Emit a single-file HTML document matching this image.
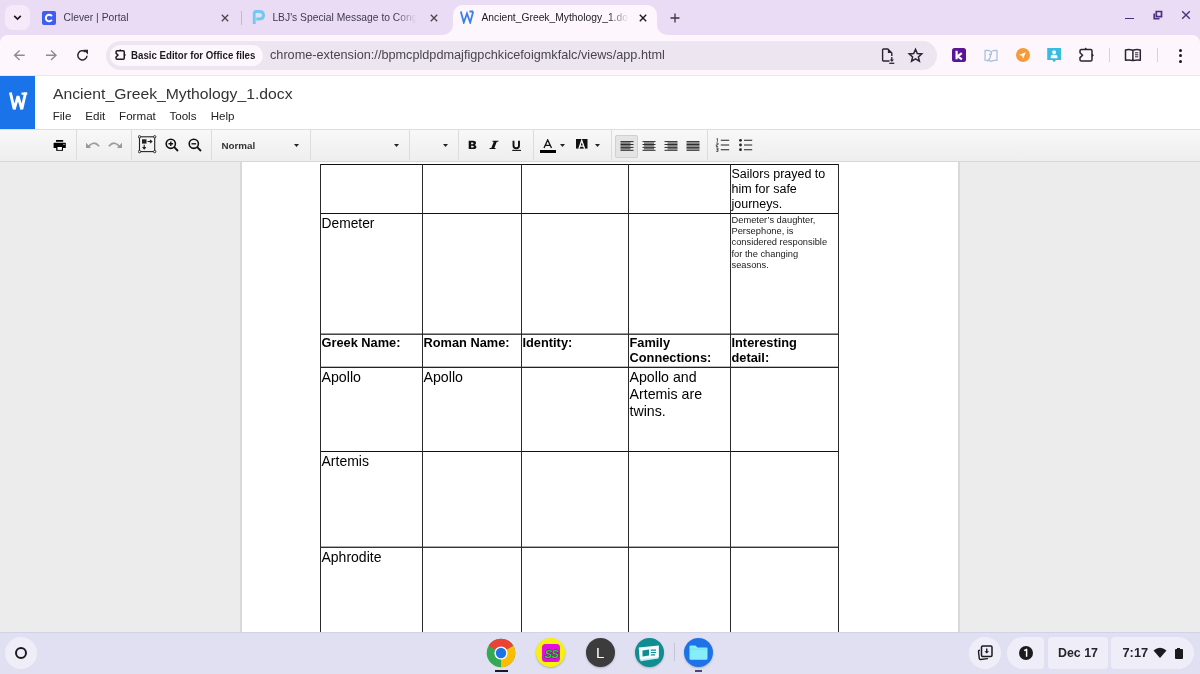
<!DOCTYPE html>
<html><head><meta charset="utf-8">
<style>
*{margin:0;padding:0;box-sizing:border-box}
body{will-change:transform}
html,body{width:1200px;height:674px;overflow:hidden;background:#ebdcf5;font-family:"Liberation Sans",sans-serif;position:relative}
.a{position:absolute}
.t{white-space:nowrap}
</style></head><body>
<!-- TAB STRIP -->
<div class="a" style="left:5px;top:5px;width:25px;height:25px;border-radius:8px;background:#f6e9f9"></div>
<svg class="a" style="left:11px;top:11px" width="13" height="13" viewBox="0 0 13 13"><path d="M3.2 4.8 L6.5 8.1 L9.8 4.8" fill="none" stroke="#1d1b20" stroke-width="1.7"/></svg>
<div class="a" style="left:443px;top:25px;width:10px;height:10px;background:#fdf7fd"></div>
<div class="a" style="left:433px;top:15px;width:20px;height:20px;border-radius:50%;background:#ebdcf5"></div>
<!-- tab 1 -->
<div class="a" style="left:42px;top:10.5px;width:14px;height:14px;border-radius:2px;background:#3f5ef0"></div>
<svg class="a" style="left:42px;top:10.5px" width="14" height="14" viewBox="0 0 14 14"><path d="M9.9 5.2 A3.3 3.3 0 1 0 9.9 8.8" fill="none" stroke="#fff" stroke-width="2"/></svg>
<div class="a t" style="left:63.5px;top:11px;font-size:10.3px;color:#403a4c;line-height:14px">Clever | Portal</div>
<svg class="a" style="left:221px;top:14px" width="8" height="8" viewBox="0 0 8 8"><path d="M0.8 0.8 L7.2 7.2 M7.2 0.8 L0.8 7.2" stroke="#49454f" stroke-width="1.3"/></svg>
<div class="a" style="left:241px;top:10.5px;width:1px;height:14px;background:#d5a9ee"></div>
<!-- tab 2 -->
<svg class="a" style="left:252px;top:10px" width="13" height="15" viewBox="0 0 13 15"><path d="M2.3 1.5 V14 M2.3 1.5 H7 Q11.5 1.5 11.5 5.3 Q11.5 9 7 9 H2.3" fill="none" stroke="#73c8f0" stroke-width="3"/><path d="M4 3.5 V12.5" stroke="#b8e6fa" stroke-width="0.8"/></svg>
<div class="a t" style="left:272.4px;top:11px;font-size:10.3px;color:#403a4c;line-height:14px;width:146px;overflow:hidden">LBJ's Special Message to Cong</div>
<div class="a" style="left:395px;top:8px;width:24px;height:18px;background:linear-gradient(90deg,rgba(235,220,245,0),#ebdcf5 90%)"></div>
<svg class="a" style="left:430px;top:14px" width="8" height="8" viewBox="0 0 8 8"><path d="M0.8 0.8 L7.2 7.2 M7.2 0.8 L0.8 7.2" stroke="#49454f" stroke-width="1.3"/></svg>
<!-- active tab -->
<div class="a" style="left:453px;top:5px;width:204px;height:35px;background:#fdf7fd;border-radius:10px 10px 0 0"></div>
<div class="a" style="left:657px;top:25px;width:10px;height:10px;background:#fdf7fd"></div>
<div class="a" style="left:657px;top:15px;width:20px;height:20px;border-radius:50%;background:#ebdcf5"></div>
<svg class="a" style="left:460px;top:10px" width="14" height="14" viewBox="0 0 14 14"><path d="M0.8 1.5 L3.8 12.5 L7 3.5 L10.2 12.5 L13.2 1.5 M9.5 1.5 H13.2" fill="none" stroke="#3b7fe6" stroke-width="1.8" stroke-linejoin="miter"/></svg>
<div class="a t" style="left:481.4px;top:11px;font-size:10.3px;color:#1d1b20;line-height:14px;width:147px;overflow:hidden">Ancient_Greek_Mythology_1.docx</div>
<div class="a" style="left:608px;top:8px;width:22px;height:18px;background:linear-gradient(90deg,rgba(253,247,253,0),#fdf7fd 95%)"></div>
<svg class="a" style="left:639px;top:14px" width="8" height="8" viewBox="0 0 8 8"><path d="M0.8 0.8 L7.2 7.2 M7.2 0.8 L0.8 7.2" stroke="#1d1b20" stroke-width="1.4"/></svg>
<svg class="a" style="left:670px;top:13px" width="10" height="10" viewBox="0 0 10 10"><path d="M5 0.5 V9.5 M0.5 5 H9.5" stroke="#3a3540" stroke-width="1.3"/></svg>
<!-- window controls -->
<div class="a" style="left:1125px;top:17.5px;width:9px;height:1.6px;background:#4c2f80"></div>
<svg class="a" style="left:1152px;top:10px" width="11" height="10" viewBox="0 0 11 10"><path d="M2.2 3.5 V8.8 H7.5" fill="none" stroke="#4c2f80" stroke-width="1.6"/><path d="M4.3 1.5 H9.5 V6.6 H4.3 Z" fill="none" stroke="#4c2f80" stroke-width="1.7"/></svg>
<svg class="a" style="left:1181px;top:10px" width="10" height="10" viewBox="0 0 10 10"><path d="M1.2 1.2 L8.8 8.8 M8.8 1.2 L1.2 8.8" stroke="#4c2f80" stroke-width="1.4"/></svg>

<!-- TOOLBAR -->
<div class="a" style="left:0;top:35px;width:1200px;height:41px;background:#fdf7fd;border-radius:8px 8px 0 0;border-bottom:1px solid #efe3ee"></div>
<svg class="a" style="left:13px;top:49px" width="13" height="13" viewBox="0 0 13 13"><path d="M11.7 6.2 H1.8 M6.6 1.4 L1.6 6.2 L6.6 11" fill="none" stroke="#8f8a95" stroke-width="1.4"/></svg>
<svg class="a" style="left:45px;top:49px" width="13" height="13" viewBox="0 0 13 13"><path d="M0.9 6.2 H10.8 M6 1.4 L11 6.2 L6 11" fill="none" stroke="#8f8a95" stroke-width="1.4"/></svg>
<svg class="a" style="left:76px;top:49px" width="13" height="13" viewBox="0 0 13 13"><path d="M11 6.7 A4.6 4.6 0 1 1 9.5 2.9" fill="none" stroke="#2a2530" stroke-width="1.5"/><path d="M7.2 0.8 H12 V5.6 Z" fill="#2a2530"/></svg>
<!-- address pill -->
<div class="a" style="left:106px;top:41px;width:831px;height:29px;border-radius:15px;background:#ede6f0"></div>
<div class="a" style="left:110px;top:45px;width:153px;height:21px;border-radius:11px;background:#fdf7fd"></div>
<svg class="a" style="left:113px;top:47px" width="16" height="16" viewBox="0 0 16 16"><path d="M4.1 3.85 H10.2 Q11.25 3.85 11.25 4.9 V11.3 Q11.25 12.35 10.2 12.35 H4.1 Q3.05 12.35 3.05 11.3 V10 L5 8.1 L3.05 6.2 V4.9 Q3.05 3.85 4.1 3.85 Z" fill="none" stroke="#1d1b20" stroke-width="1.5" stroke-linejoin="round"/><path d="M5.6 3.9 L7.15 2 L8.7 3.9 Z M11.2 6.6 L13.1 8.1 L11.2 9.6 Z" fill="#1d1b20"/></svg>
<div class="a t" style="left:130.8px;top:48px;font-size:11.2px;font-weight:bold;color:#1d1b20;line-height:14px;transform:scaleX(0.866);transform-origin:0 0">Basic Editor for Office files</div>
<div class="a t" style="left:270px;top:47px;font-size:12.7px;color:#49454f;line-height:16px">chrome-extension://bpmcpldpdmajfigpchkicefoigmkfalc/views/app.html</div>
<svg class="a" style="left:880px;top:47px" width="16" height="18" viewBox="0 0 16 18"><path d="M9.5 14 H3.5 Q2.6 14 2.6 13.1 V2.9 Q2.6 2 3.5 2 H7.9 L11.8 5.9 V9" fill="none" stroke="#2a2530" stroke-width="1.4" stroke-linejoin="round"/><path d="M7.9 2 V5.9 H11.8 Z" fill="#2a2530"/><path d="M11.8 10 V14.2" stroke="#2a2530" stroke-width="1.3"/><path d="M9.6 12.6 L11.8 14.8 L14 12.6 Z" fill="#2a2530"/><path d="M9.3 16.3 H14.3" stroke="#2a2530" stroke-width="1.3"/></svg>
<svg class="a" style="left:907px;top:47px" width="17" height="16" viewBox="0 0 17 16"><path d="M8.5 2.3 L10.3 6.5 L14.8 6.9 L11.4 9.9 L12.4 14.2 L8.5 11.9 L4.6 14.2 L5.6 9.9 L2.2 6.9 L6.7 6.5 Z" fill="none" stroke="#2a2530" stroke-width="1.5" stroke-linejoin="miter"/></svg>
<!-- extensions -->
<svg class="a" style="left:952px;top:48px" width="14" height="14" viewBox="0 0 14 14"><rect x="0" y="0" width="14" height="14" rx="2.5" fill="#5a1596"/><path d="M4.6 2.8 V11.3" stroke="#fff" stroke-width="2.2"/><path d="M9.8 5.2 L5.6 8.3 L9.9 11.4" fill="none" stroke="#fff" stroke-width="2.2"/></svg>
<svg class="a" style="left:983px;top:48px" width="16" height="16" viewBox="0 0 16 16"><path d="M2 2.5 H6 L8.3 3.8 L10.6 2.5 H14 V12.3 H10.6 L8.3 13.4 L6 12.3 H2 Z" fill="none" stroke="#a9c3dc" stroke-width="1.3" stroke-linejoin="round"/><path d="M6 6 Q8 6.5 7.5 8.5 Q7 10.5 4.5 13.5 M8.3 3.8 V7" fill="none" stroke="#a9c3dc" stroke-width="1.3"/></svg>
<div class="a" style="left:1015.5px;top:48px;width:14.2px;height:14.2px;border-radius:50%;background:#f59c38"></div>
<svg class="a" style="left:1017px;top:49.5px" width="11" height="11" viewBox="0 0 11 11"><path d="M8.8 2.2 L2 5 L5.3 5.7 L6 9 Z" fill="#fff"/></svg>
<svg class="a" style="left:1046px;top:47px" width="16" height="17" viewBox="0 0 16 17"><path d="M1.2 1 H15 V13 H10 L8.1 15.3 L6.2 13 H1.2 Z" fill="#3bbbe0"/><rect x="6.3" y="3.6" width="3.6" height="3.4" rx="1.2" fill="#fff"/><path d="M4.8 11.2 V9.6 Q4.8 7.8 6.8 7.8 H9.4 Q11.4 7.8 11.4 9.6 V11.2 Z" fill="#fff"/></svg>
<svg class="a" style="left:1078px;top:47px" width="17" height="16" viewBox="0 0 17 16"><path d="M3.3 2.4 H12.7 Q14 2.4 14 3.7 V12.7 Q14 14 12.7 14 H3.3 Q2 14 2 12.7 V10.6 L4.6 8.2 L2 5.8 V3.7 Q2 2.4 3.3 2.4 Z" fill="none" stroke="#2a2530" stroke-width="1.5" stroke-linejoin="round"/><path d="M6 2.6 L7.7 0.6 L9.4 2.6 Z M13.8 6.4 L16 8.2 L13.8 10 Z" fill="#2a2530"/></svg>
<div class="a" style="left:1109px;top:48px;width:1px;height:14px;background:#e2c7ef"></div>
<svg class="a" style="left:1124px;top:48px" width="18" height="14" viewBox="0 0 18 14"><path d="M1.5 2 Q5 1 8.9 2.3 Q12.8 1 16.3 2 V12.2 Q12.8 11.4 8.9 12.6 Q5 11.4 1.5 12.2 Z M8.9 2.3 V12.6" fill="none" stroke="#2a2530" stroke-width="1.5" stroke-linejoin="round"/><path d="M11 4.8 H14.3 M11 6.8 H14.3 M11 8.8 H14.3" stroke="#2a2530" stroke-width="1"/></svg>
<div class="a" style="left:1157px;top:48px;width:1px;height:14px;background:#e2c7ef"></div>
<div class="a" style="left:1178.8px;top:48.5px;width:3px;height:3px;border-radius:50%;background:#1d1b20"></div>
<div class="a" style="left:1178.8px;top:54px;width:3px;height:3px;border-radius:50%;background:#1d1b20"></div>
<div class="a" style="left:1178.8px;top:59.5px;width:3px;height:3px;border-radius:50%;background:#1d1b20"></div>

<!-- APP HEADER -->
<div class="a" style="left:0;top:76px;width:1200px;height:53px;background:#fff"></div>
<div class="a" style="left:0;top:76px;width:35px;height:53px;background:#1a73e8"></div>
<svg class="a" style="left:8px;top:92px" width="20" height="19" viewBox="0 0 20 19"><path d="M2.4 0.5 L6.2 17.3 L10 4.2 L13.8 17.3 L17.6 0.5" fill="none" stroke="#fff" stroke-width="2.9" stroke-linejoin="miter" stroke-miterlimit="3"/><path d="M13.5 1.6 H19.3" stroke="#fff" stroke-width="2.2"/></svg>
<div class="a t" style="left:53px;top:84.9px;font-size:14.3px;color:#333;line-height:18px;transform:scaleX(1.1);transform-origin:0 0">Ancient_Greek_Mythology_1.docx</div>
<div class="a t" style="left:52.699999999999996px;top:109.3px;font-size:11.6px;color:#222;line-height:14px">File</div>
<div class="a t" style="left:85.30000000000001px;top:109.3px;font-size:11.6px;color:#222;line-height:14px">Edit</div>
<div class="a t" style="left:119.10000000000001px;top:109.3px;font-size:11.6px;color:#222;line-height:14px">Format</div>
<div class="a t" style="left:169.4px;top:109.3px;font-size:11.6px;color:#222;line-height:14px">Tools</div>
<div class="a t" style="left:210.70000000000002px;top:109.3px;font-size:11.6px;color:#222;line-height:14px">Help</div>

<!-- EDIT TOOLBAR -->
<div class="a" style="left:0;top:129px;width:1200px;height:33px;background:linear-gradient(#f8f8f8,#eeeeee);border-top:1px solid #dedede;border-bottom:1px solid #d8d8d8"></div>


<!-- toolbar separators -->
<div class="a" style="left:76px;top:130px;width:1px;height:30px;background:#dcdcdc"></div>
<div class="a" style="left:131px;top:130px;width:1px;height:30px;background:#dcdcdc"></div>
<div class="a" style="left:211px;top:130px;width:1px;height:30px;background:#dcdcdc"></div>
<div class="a" style="left:310px;top:130px;width:1px;height:30px;background:#dcdcdc"></div>
<div class="a" style="left:409px;top:130px;width:1px;height:30px;background:#dcdcdc"></div>
<div class="a" style="left:458px;top:130px;width:1px;height:30px;background:#dcdcdc"></div>
<div class="a" style="left:533px;top:130px;width:1px;height:30px;background:#dcdcdc"></div>
<div class="a" style="left:611px;top:130px;width:1px;height:30px;background:#dcdcdc"></div>
<div class="a" style="left:707px;top:130px;width:1px;height:30px;background:#dcdcdc"></div>
<!-- print -->
<svg class="a" style="left:53px;top:139px" width="14" height="13" viewBox="0 0 14 13"><rect x="3" y="1" width="7.2" height="1.8" rx="0.3" fill="#000"/><path d="M1.4 3.8 H12 Q12.8 3.8 12.8 4.6 V9 H0.6 V4.6 Q0.6 3.8 1.4 3.8 Z" fill="#000"/><rect x="3.2" y="7.1" width="6.8" height="4.7" fill="#000"/><rect x="4.5" y="8" width="4.4" height="2.9" fill="#fff"/><circle cx="11" cy="5.3" r="0.65" fill="#fff"/></svg>
<!-- undo/redo -->
<svg class="a" style="left:85px;top:141px" width="15" height="8" viewBox="0 0 15 8"><path d="M1 1.8 V6.9 H6.1 Z" fill="#9a9a9a"/><path d="M3.6 5.4 Q8.6 -0.9 14.2 5.3" fill="none" stroke="#9a9a9a" stroke-width="1.7"/></svg>
<svg class="a" style="left:108px;top:141px;transform:scaleX(-1)" width="15" height="8" viewBox="0 0 15 8"><path d="M1 1.8 V6.9 H6.1 Z" fill="#9a9a9a"/><path d="M3.6 5.4 Q8.6 -0.9 14.2 5.3" fill="none" stroke="#9a9a9a" stroke-width="1.7"/></svg>
<!-- fit -->
<svg class="a" style="left:138px;top:135px" width="19" height="19" viewBox="0 0 19 19"><rect x="1.5" y="1.8" width="15.2" height="14.8" fill="none" stroke="#222" stroke-width="1.1"/><g fill="#efefef" stroke="#222" stroke-width="0.9"><circle cx="1.5" cy="1.8" r="1.2"/><circle cx="16.7" cy="1.8" r="1.2"/><circle cx="1.5" cy="16.6" r="1.2"/><circle cx="16.7" cy="16.6" r="1.2"/></g><rect x="4" y="4.3" width="4.5" height="4.3" fill="#222"/><path d="M9.5 6.5 H13.6 M12 4.9 L13.8 6.5 L12 8.1 M6.2 9.8 V13.8 M4.6 12.2 L6.2 14 L7.8 12.2" fill="none" stroke="#222" stroke-width="1.1"/></svg>
<!-- zoom in/out -->
<svg class="a" style="left:165px;top:138px" width="14" height="14" viewBox="0 0 14 14"><circle cx="5.8" cy="5.8" r="4.6" fill="none" stroke="#111" stroke-width="1.6"/><path d="M9.2 9.2 L13 13" stroke="#111" stroke-width="1.8"/><path d="M3.5 5.8 H8.1 M5.8 3.5 V8.1" stroke="#111" stroke-width="1.4"/></svg>
<svg class="a" style="left:188px;top:138px" width="14" height="14" viewBox="0 0 14 14"><circle cx="5.8" cy="5.8" r="4.6" fill="none" stroke="#111" stroke-width="1.6"/><path d="M9.2 9.2 L13 13" stroke="#111" stroke-width="1.8"/><path d="M3.5 5.8 H8.1" stroke="#111" stroke-width="1.4"/></svg>
<div class="a t" style="left:221.5px;top:139.6px;font-size:9.8px;font-weight:bold;color:#333;line-height:12px">Normal</div>
<svg class="a" style="left:294px;top:144px" width="5" height="3" viewBox="0 0 5 3"><path d="M0 0 H5 L2.5 3 Z" fill="#222"/></svg>
<svg class="a" style="left:393.5px;top:144px" width="5" height="3" viewBox="0 0 5 3"><path d="M0 0 H5 L2.5 3 Z" fill="#222"/></svg>
<svg class="a" style="left:442.5px;top:144px" width="5" height="3" viewBox="0 0 5 3"><path d="M0 0 H5 L2.5 3 Z" fill="#222"/></svg>
<!-- B I U -->
<svg class="a" style="left:468px;top:140px" width="9" height="10" viewBox="0 0 9 10"><path fill-rule="evenodd" fill="#111" d="M0.7 0.8 H5 Q8 0.8 8 3.1 Q8 4.5 6.7 4.9 Q8.4 5.4 8.4 7 Q8.4 9 5.4 9 H0.7 Z M3.1 2.4 V4.2 H4.4 Q5.5 4.2 5.5 3.3 Q5.5 2.4 4.4 2.4 Z M3.1 5.7 V7.5 H4.7 Q5.9 7.5 5.9 6.6 Q5.9 5.7 4.7 5.7 Z"/></svg>
<svg class="a" style="left:489px;top:140px" width="10" height="10" viewBox="0 0 10 10"><path fill="#111" d="M3.6 0.8 H9.6 L9.3 1.8 H7.8 L5.3 8 H6.7 L6.4 9 H0.4 L0.7 8 H2.3 L4.8 1.8 H3.3 Z"/></svg>
<svg class="a" style="left:512px;top:140px" width="9" height="12" viewBox="0 0 9 12"><path d="M1.5 0.8 V5.4 Q1.5 8.2 4.25 8.2 Q7 8.2 7 5.4 V0.8" fill="none" stroke="#111" stroke-width="1.9"/><path d="M0.2 10.4 H9" stroke="#111" stroke-width="1.1"/></svg>
<!-- font color -->
<svg class="a" style="left:542.5px;top:139px" width="10" height="10" viewBox="0 0 10 10"><path d="M1 9 L4.7 0.9 L8.5 9 M2.3 6.3 H7.2" fill="none" stroke="#111" stroke-width="1.3"/></svg>
<div class="a" style="left:539.5px;top:150.3px;width:16.5px;height:3px;background:#000"></div>
<svg class="a" style="left:560px;top:143.7px" width="5" height="3" viewBox="0 0 5 3"><path d="M0 0 H5 L2.5 3 Z" fill="#222"/></svg>
<!-- highlight -->
<svg class="a" style="left:576px;top:139.4px" width="12" height="10" viewBox="0 0 12 10"><rect x="0" y="0" width="11.5" height="9.6" fill="#111"/><path d="M2.9 9.8 L5.75 1.4 L8.6 9.8 M4.2 7.2 H7.3" fill="none" stroke="#fff" stroke-width="1.3"/></svg>
<svg class="a" style="left:594.5px;top:143.7px" width="5" height="3" viewBox="0 0 5 3"><path d="M0 0 H5 L2.5 3 Z" fill="#222"/></svg>
<!-- align -->
<div class="a" style="left:615px;top:135px;width:23px;height:23px;border:1px solid #d0d0d0;border-radius:2px;background:#e4e4e4"></div>
<svg class="a" style="left:620px;top:140.5px" width="14" height="10" viewBox="0 0 14 10"><path d="M0.5 0.6 H13.5 M0.5 2.05 H10.5 M0.5 3.5 H13.5 M0.5 4.95 H10.5 M0.5 6.4 H13.5 M0.5 7.85 H10.5 M0.5 9.3 H13.5" stroke="#222" stroke-width="0.95"/></svg>
<svg class="a" style="left:642px;top:140.5px" width="14" height="10" viewBox="0 0 14 10"><path d="M0.5 0.6 H13.5 M2 2.05 H12 M0.5 3.5 H13.5 M2 4.95 H12 M0.5 6.4 H13.5 M2 7.85 H12 M0.5 9.3 H13.5" stroke="#222" stroke-width="0.95"/></svg>
<svg class="a" style="left:664px;top:140.5px" width="14" height="10" viewBox="0 0 14 10"><path d="M0.5 0.6 H13.5 M3.5 2.05 H13.5 M0.5 3.5 H13.5 M3.5 4.95 H13.5 M0.5 6.4 H13.5 M3.5 7.85 H13.5 M0.5 9.3 H13.5" stroke="#222" stroke-width="0.95"/></svg>
<svg class="a" style="left:685.5px;top:140.5px" width="14" height="10" viewBox="0 0 14 10"><path d="M0.5 0.6 H13.5 M0.5 2.05 H13.5 M0.5 3.5 H13.5 M0.5 4.95 H13.5 M0.5 6.4 H13.5 M0.5 7.85 H13.5 M0.5 9.3 H13.5" stroke="#222" stroke-width="0.95"/></svg>
<!-- lists -->
<svg class="a" style="left:715px;top:138px" width="15" height="14" viewBox="0 0 15 14"><path d="M5.8 2.3 H14.2 M5.8 7 H14.2 M5.8 11.7 H14.2" stroke="#222" stroke-width="1.1"/><path d="M1.6 0.6 L2.4 0.4 V3.8 M1.2 5 H3 V6.8 H1.3 V8.6 H3.1 M1.2 10 H3 V13.4 H1.2 M1.5 11.7 H3" fill="none" stroke="#222" stroke-width="0.75"/></svg>
<svg class="a" style="left:738px;top:138px" width="15" height="14" viewBox="0 0 15 14"><circle cx="2.5" cy="2.3" r="1.4" fill="#222"/><circle cx="2.5" cy="7" r="1.4" fill="#222"/><circle cx="2.5" cy="11.7" r="1.4" fill="#222"/><path d="M6 2.3 H14.2 M6 7 H14.2 M6 11.7 H14.2" stroke="#222" stroke-width="1.1"/></svg>

<!-- DOC AREA -->
<div class="a" style="left:0;top:162px;width:1200px;height:470px;background:#ececec"></div>
<div class="a" style="left:240px;top:162px;width:2px;height:470px;background:#d9d9d9"></div>
<div class="a" style="left:958px;top:162px;width:2px;height:470px;background:#d9d9d9"></div>
<div class="a" style="left:242px;top:162px;width:716px;height:470px;background:#fff"></div>

<!-- TABLE -->
<svg class="a" style="left:300px;top:150px" width="560" height="482" viewBox="300 150 560 482"><rect x="320" y="164" width="519" height="1" fill="#111"/><rect x="320" y="213" width="519" height="1" fill="#111"/><rect x="320" y="333.5" width="519" height="1.4" fill="#333"/><rect x="320" y="366.7" width="519" height="1.3" fill="#222"/><rect x="320" y="451" width="519" height="1" fill="#111"/><rect x="320" y="546.6" width="519" height="1.4" fill="#333"/><rect x="320" y="164" width="1" height="468" fill="#2a2a2a"/><rect x="422" y="164" width="1" height="468" fill="#2a2a2a"/><rect x="521" y="164" width="1" height="468" fill="#2a2a2a"/><rect x="628" y="164" width="1" height="468" fill="#2a2a2a"/><rect x="730" y="164" width="1" height="468" fill="#2a2a2a"/><rect x="838" y="164" width="1" height="468" fill="#2a2a2a"/></svg>
<div class="a t" style="left:731.5px;top:167.17px;font-size:12.5px;line-height:15px;color:#000">Sailors prayed to</div>
<div class="a t" style="left:731.5px;top:181.97px;font-size:12.5px;line-height:15px;color:#000">him for safe</div>
<div class="a t" style="left:731.5px;top:197.17px;font-size:12.5px;line-height:15px;color:#000">journeys.</div>
<div class="a t" style="left:321.5px;top:214.62px;font-size:13.8px;line-height:17px;color:#000">Demeter</div>
<div class="a t" style="left:731.5px;top:215.28px;font-size:9.3px;line-height:11px;color:#1a1a1a">Demeter&#8217;s daughter,</div>
<div class="a t" style="left:731.5px;top:226.38px;font-size:9.3px;line-height:11px;color:#1a1a1a">Persephone, is</div>
<div class="a t" style="left:731.5px;top:237.48px;font-size:9.3px;line-height:11px;color:#1a1a1a">considered responsible</div>
<div class="a t" style="left:731.5px;top:248.58px;font-size:9.3px;line-height:11px;color:#1a1a1a">for the changing</div>
<div class="a t" style="left:731.5px;top:259.78px;font-size:9.3px;line-height:11px;color:#1a1a1a">seasons.</div>
<div class="a t" style="left:321.5px;top:335.36px;font-size:12.8px;line-height:16px;font-weight:bold;color:#000">Greek Name:</div>
<div class="a t" style="left:423.5px;top:335.36px;font-size:12.8px;line-height:16px;font-weight:bold;color:#000">Roman Name:</div>
<div class="a t" style="left:522.5px;top:335.36px;font-size:12.8px;line-height:16px;font-weight:bold;color:#000">Identity:</div>
<div class="a t" style="left:629.5px;top:335.06px;font-size:12.8px;line-height:16px;font-weight:bold;color:#000">Family</div>
<div class="a t" style="left:629.5px;top:350.36px;font-size:12.8px;line-height:16px;font-weight:bold;color:#000">Connections:</div>
<div class="a t" style="left:731.5px;top:335.06px;font-size:12.8px;line-height:16px;font-weight:bold;color:#000">Interesting</div>
<div class="a t" style="left:731.5px;top:350.36px;font-size:12.8px;line-height:16px;font-weight:bold;color:#000">detail:</div>
<div class="a t" style="left:321.5px;top:368.78px;font-size:14.2px;line-height:17px;color:#000">Apollo</div>
<div class="a t" style="left:423.5px;top:368.78px;font-size:14.2px;line-height:17px;color:#000">Apollo</div>
<div class="a t" style="left:629.5px;top:368.88px;font-size:14.2px;line-height:17px;color:#000">Apollo and</div>
<div class="a t" style="left:629.5px;top:385.68px;font-size:14.2px;line-height:17px;color:#000">Artemis are</div>
<div class="a t" style="left:629.5px;top:402.68px;font-size:14.2px;line-height:17px;color:#000">twins.</div>
<div class="a t" style="left:321.5px;top:452.75px;font-size:14px;line-height:17px;color:#000">Artemis</div>
<div class="a t" style="left:321.5px;top:548.85px;font-size:14px;line-height:17px;color:#000">Aphrodite</div>
<!-- /TABLE -->
<!-- SHELF -->
<div class="a" style="left:0;top:632px;width:1200px;height:42px;background:#e1e0f2;border-top:1px solid #d3d1e6"></div>

<div class="a" style="left:5px;top:637px;width:32px;height:32px;border-radius:50%;background:#efeef8"></div>
<div class="a" style="left:15px;top:647px;width:12px;height:12px;border-radius:50%;border:2px solid #1b1b1f"></div>
<!-- chrome -->
<svg class="a" style="left:486px;top:638px" width="30" height="30" viewBox="0 0 30 30">
<circle cx="15" cy="15" r="14.3" fill="#34a853"/>
<path d="M15 15 L2.62 7.85 A14.3 14.3 0 0 1 27.38 7.85 Z" fill="#ea4335"/>
<path d="M15 15 L27.38 7.85 A14.3 14.3 0 0 1 15 29.3 Z" fill="#fbbc04"/>
<circle cx="15" cy="15" r="6.6" fill="#fff"/><circle cx="15" cy="15" r="5.2" fill="#1a73e8"/></svg>
<div class="a" style="left:495px;top:670px;width:13px;height:2px;background:#1b1b1f"></div>
<!-- SS -->
<div class="a" style="left:536.2px;top:638.3px;width:29px;height:29px;border-radius:50%;background:#f6f20a;box-shadow:0 1px 2px rgba(60,60,80,.3)"></div>
<div class="a" style="left:541.8px;top:643.9px;width:18.4px;height:18.4px;border-radius:3.5px;background:#e20ee0"></div>
<svg class="a" style="left:541.8px;top:643.9px" width="19" height="19" viewBox="0 0 19 19"><text x="9.2" y="13.6" text-anchor="middle" font-family="Liberation Sans" font-weight="bold" font-style="italic" font-size="11.5" letter-spacing="-1" fill="#33d040" stroke="#123312" stroke-width="0.8" paint-order="stroke">SS</text></svg>
<!-- L -->
<div class="a" style="left:585.7px;top:638.3px;width:29px;height:29px;border-radius:50%;background:#3c3c3c;box-shadow:0 1px 2px rgba(60,60,80,.3)"></div>
<div class="a t" style="left:585.7px;top:644px;width:29px;text-align:center;font-size:15px;color:#fff;line-height:18px">L</div>
<!-- classroom-like -->
<div class="a" style="left:634.9px;top:638.3px;width:29px;height:29px;border-radius:50%;background:#0f8d90;box-shadow:0 1px 2px rgba(60,60,80,.3)"></div>
<svg class="a" style="left:637px;top:644px" width="25" height="19" viewBox="0 0 25 19"><path d="M2.5 5 L21.5 1.8 V14.5 L3.5 17.2 Z" fill="#c8e8f0"/><path d="M1.7 3.6 L21.8 1.5 V13.2 L2.7 15.6 Z" fill="#f4fbfc"/><path d="M5.5 6.4 L12 5.6 V11.6 L5.5 12.4 Z" fill="#0f8d90"/><path d="M13.8 6.2 H19 M13.8 8.5 H19 M13.8 10.8 H18" stroke="#0f8d90" stroke-width="1.2"/></svg>
<div class="a" style="left:674px;top:643px;width:1px;height:18px;background:#c5c3d8"></div>
<!-- files -->
<div class="a" style="left:684.2px;top:638.3px;width:29px;height:29px;border-radius:50%;background:#1c72e6;box-shadow:0 1px 2px rgba(60,60,80,.3)"></div>
<svg class="a" style="left:689px;top:645px" width="19" height="15" viewBox="0 0 19 15"><path d="M0.5 1.5 Q0.5 0.5 1.5 0.5 H6.5 L8.5 2.5 H17.5 Q18.5 2.5 18.5 3.5 V13.8 Q18.5 14.8 17.5 14.8 H1.5 Q0.5 14.8 0.5 13.8 Z" fill="#86eef8"/><path d="M0.5 4.2 H18.5" stroke="#6fd8ea" stroke-width="0.6"/></svg>
<div class="a" style="left:695px;top:670px;width:7px;height:2px;background:#4a4a66"></div>
<!-- right tray -->
<div class="a" style="left:969px;top:637px;width:32px;height:32px;border-radius:50%;background:#efeef8"></div>
<svg class="a" style="left:976px;top:644px" width="18" height="18" viewBox="0 0 18 18"><path d="M3.4 6.3 Q2.4 6.5 2.5 7.5 L3.3 14.6 Q3.5 15.6 4.5 15.5 L11.5 14.6" fill="none" stroke="#1b1b1f" stroke-width="1.4" stroke-linecap="round"/><rect x="5.5" y="2" width="10.5" height="10.5" rx="1.2" fill="none" stroke="#1b1b1f" stroke-width="1.5"/><path d="M10.75 4.5 V8.2" stroke="#1b1b1f" stroke-width="1.4"/><path d="M8.4 7.2 L10.75 9.6 L13.1 7.2 Z" fill="#1b1b1f"/></svg>
<div class="a" style="left:1007px;top:637px;width:37px;height:32px;border-radius:16px 4px 4px 16px;background:#efeef8"></div>
<div class="a" style="left:1019px;top:646px;width:14px;height:14px;border-radius:50%;background:#1b1b1f"></div>
<svg class="a" style="left:1019px;top:646px" width="14" height="14" viewBox="0 0 14 14"><path d="M5.2 4.6 L7.6 3.4 V10.8" fill="none" stroke="#fff" stroke-width="1.5" stroke-linejoin="round"/></svg>
<div class="a" style="left:1048px;top:637px;width:60px;height:32px;border-radius:4px;background:#efeef8"></div>
<div class="a t" style="left:1048px;top:645px;width:60px;text-align:center;font-size:12.4px;font-weight:bold;color:#242429;line-height:16px">Dec 17</div>
<div class="a" style="left:1111px;top:637px;width:83px;height:32px;border-radius:4px 16px 16px 4px;background:#efeef8"></div>
<div class="a t" style="left:1122.5px;top:645px;font-size:12.8px;font-weight:bold;color:#242429;line-height:16px">7:17</div>
<svg class="a" style="left:1153px;top:647px" width="14" height="12" viewBox="0 0 14 12"><path d="M0.5 3.5 Q7 -2 13.5 3.5 L7 11 Z" fill="#1b1b1f"/></svg>
<div class="a" style="left:1175px;top:649px;width:7.5px;height:9.5px;border-radius:1px;background:#1b1b1f"></div>
<div class="a" style="left:1177.2px;top:647.8px;width:3px;height:1.5px;background:#1b1b1f"></div>
</body></html>
